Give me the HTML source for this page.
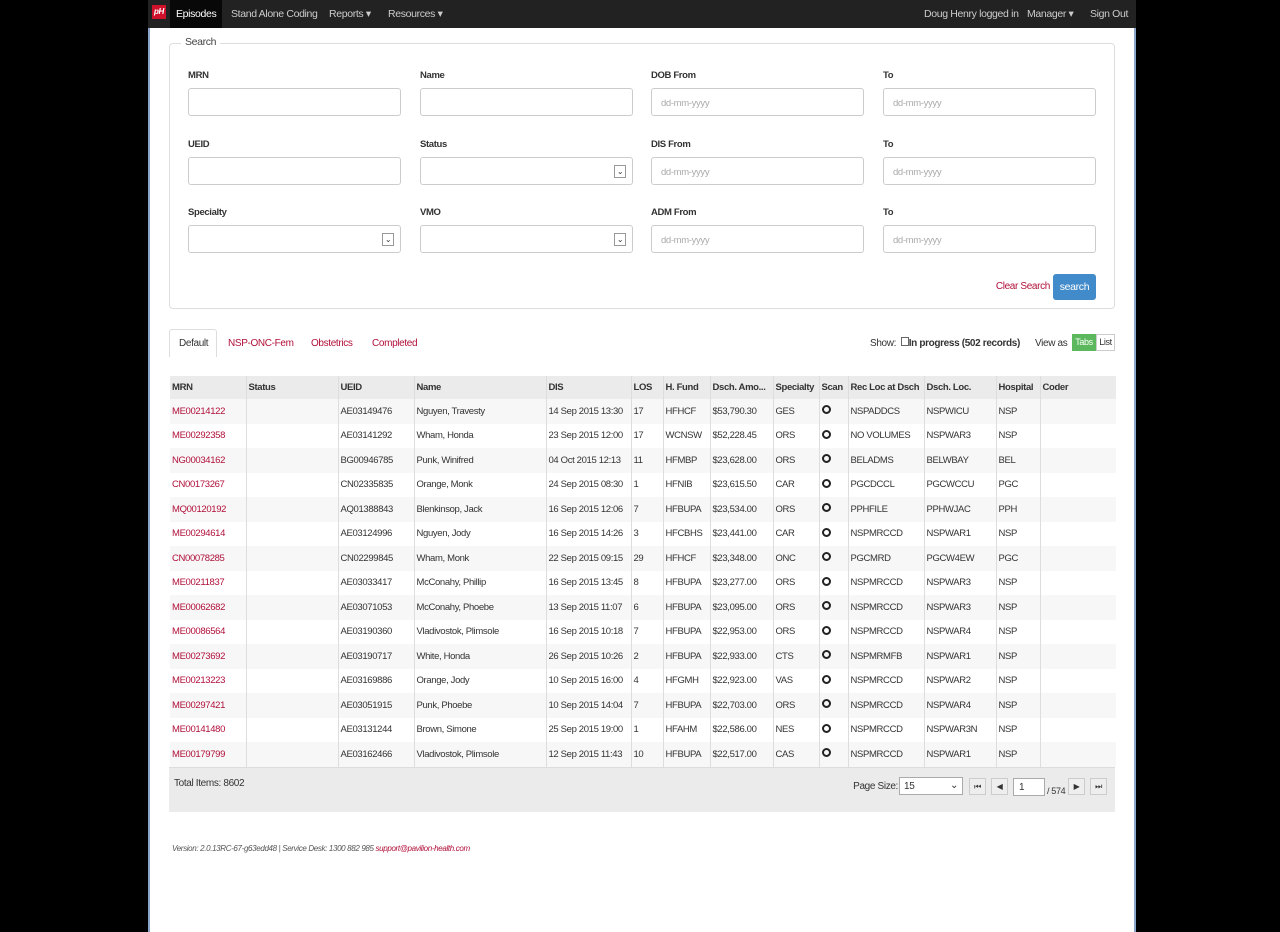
<!DOCTYPE html>
<html><head><meta charset="utf-8"><style>
*{box-sizing:border-box;margin:0;padding:0}
body{width:1280px;height:932px;background:#000;font-family:"Liberation Sans",sans-serif;font-size:10px;color:#333;position:relative;overflow:hidden;letter-spacing:-0.35px}
.page{position:absolute;left:148px;top:0;width:988px;height:932px;background:#fff;border-left:2px solid #8aa6c8;border-right:2px solid #8aa6c8}
.nav{position:absolute;left:148px;top:0;width:988px;height:28px;background:#222;color:#ccc;font-size:10.5px}
.nav span{position:absolute;top:8px}
.a{position:absolute;white-space:nowrap}
.lbl{position:absolute;font-weight:bold;font-size:9.5px;color:#333}
.inp{position:absolute;width:213px;height:28px;border:1px solid #ccc;border-radius:3px;background:#fff;color:#aaa;font-size:9.5px;padding:9px 0 0 9px}
.sel{position:absolute;right:6px;top:7px;width:12px;height:13px;border:1px solid #999;font-size:8px;line-height:11px;text-align:center;color:#333}
table{position:absolute;left:170px;top:376px;width:946px;border-collapse:collapse;font-size:9.5px;table-layout:fixed}
td,th{height:24.5px;padding:0 2px;text-align:left;white-space:nowrap;overflow:hidden;border-left:1px solid #ddd}
td:first-child,th:first-child{border-left:none}
th{background:#ebebeb;font-weight:bold;height:23px}
tr:nth-child(even) td{background:#f7f7f7}
td.r{color:#b0103a}
.o{display:inline-block;width:9px;height:9px;border:2px solid #222;border-radius:50%}
.btn{position:absolute;border:1px solid #ccc;background:#eee;height:17px;width:17px;font-size:8px;text-align:center;line-height:15px}
</style></head><body>
<div class="page"></div>
<div class="nav">
<div class="a" style="left:4px;top:5px;width:14px;height:14px;background:#d0112b;color:#fff;font-size:8px;font-weight:bold;font-style:italic;line-height:14px;text-align:center">pH</div>
<div class="a" style="left:22px;top:0;width:52px;height:28px;background:#080808"></div>
<span style="left:28px;color:#fff">Episodes</span>
<span style="left:83px">Stand Alone Coding</span>
<span style="left:181px">Reports ▾</span>
<span style="left:240px">Resources ▾</span>
<span style="left:776px">Doug Henry logged in</span>
<span style="left:879px">Manager ▾</span>
<span style="left:942px">Sign Out</span>
</div>
<div class="a" style="left:169px;top:43px;width:946px;height:266px;border:1px solid #ddd;border-radius:4px"></div>
<div class="a" style="left:181px;top:36px;background:#fff;padding:0 4px;font-size:10.5px;color:#444">Search</div>

<div class="lbl" style="left:188px;top:70px">MRN</div><div class="inp" style="left:188px;top:88px"></div>
<div class="lbl" style="left:420px;top:70px">Name</div><div class="inp" style="left:420px;top:88px"></div>
<div class="lbl" style="left:651px;top:70px">DOB From</div><div class="inp" style="left:651px;top:88px">dd-mm-yyyy</div>
<div class="lbl" style="left:883px;top:70px">To</div><div class="inp" style="left:883px;top:88px">dd-mm-yyyy</div>
<div class="lbl" style="left:188px;top:139px">UEID</div><div class="inp" style="left:188px;top:157px"></div>
<div class="lbl" style="left:420px;top:139px">Status</div><div class="inp" style="left:420px;top:157px"><div class="sel">⌄</div></div>
<div class="lbl" style="left:651px;top:139px">DIS From</div><div class="inp" style="left:651px;top:157px">dd-mm-yyyy</div>
<div class="lbl" style="left:883px;top:139px">To</div><div class="inp" style="left:883px;top:157px">dd-mm-yyyy</div>
<div class="lbl" style="left:188px;top:207px">Specialty</div><div class="inp" style="left:188px;top:225px"><div class="sel">⌄</div></div>
<div class="lbl" style="left:420px;top:207px">VMO</div><div class="inp" style="left:420px;top:225px"><div class="sel">⌄</div></div>
<div class="lbl" style="left:651px;top:207px">ADM From</div><div class="inp" style="left:651px;top:225px">dd-mm-yyyy</div>
<div class="lbl" style="left:883px;top:207px">To</div><div class="inp" style="left:883px;top:225px">dd-mm-yyyy</div>

<div class="a" style="right:230px;top:281px;color:#b0103a;font-size:10px">Clear Search</div>
<div class="a" style="left:1053px;top:274px;width:43px;height:26px;background:#428bca;border-radius:3px;color:#fff;font-size:10.5px;text-align:center;line-height:26px">search</div>

<div class="a" style="left:169px;top:329px;width:48px;height:28px;border:1px solid #ddd;border-bottom:none;border-radius:3px 3px 0 0"></div>
<div class="a" style="left:179px;top:338px">Default</div>
<div class="a" style="left:228px;top:338px;color:#b0103a">NSP-ONC-Fem</div>
<div class="a" style="left:311px;top:338px;color:#b0103a">Obstetrics</div>
<div class="a" style="left:372px;top:338px;color:#b0103a">Completed</div>
<div class="a" style="left:870px;top:338px">Show:</div>
<div class="a" style="left:901px;top:337px;width:8px;height:9px;border:1px solid #666"></div>
<div class="a" style="right:260px;top:338px;font-weight:bold">In progress (502 records)</div>
<div class="a" style="left:1035px;top:338px">View as</div>
<div class="a" style="left:1072px;top:334px;width:24px;height:17px;background:#5cb85c;color:#fff;font-size:9px;text-align:center;line-height:17px">Tabs</div>
<div class="a" style="left:1096px;top:334px;width:19px;height:17px;border:1px solid #ccc;font-size:9px;text-align:center;line-height:15px">List</div>

<table>
<colgroup><col style="width:76px"><col style="width:92px"><col style="width:76px"><col style="width:132px"><col style="width:85px"><col style="width:32px"><col style="width:47px"><col style="width:63px"><col style="width:46px"><col style="width:29px"><col style="width:76px"><col style="width:72px"><col style="width:44px"><col style="width:76px"></colgroup>
<tr><th>MRN</th><th>Status</th><th>UEID</th><th>Name</th><th>DIS</th><th>LOS</th><th>H. Fund</th><th>Dsch. Amo...</th><th>Specialty</th><th>Scan</th><th>Rec Loc at Dsch</th><th>Dsch. Loc.</th><th>Hospital</th><th>Coder</th></tr>
<tr><td class="r">ME00214122</td><td></td><td>AE03149476</td><td>Nguyen, Travesty</td><td>14 Sep 2015 13:30</td><td>17</td><td>HFHCF</td><td>$53,790.30</td><td>GES</td><td><i class="o"></i></td><td>NSPADDCS</td><td>NSPWICU</td><td>NSP</td><td></td></tr>
<tr><td class="r">ME00292358</td><td></td><td>AE03141292</td><td>Wham, Honda</td><td>23 Sep 2015 12:00</td><td>17</td><td>WCNSW</td><td>$52,228.45</td><td>ORS</td><td><i class="o"></i></td><td>NO VOLUMES</td><td>NSPWAR3</td><td>NSP</td><td></td></tr>
<tr><td class="r">NG00034162</td><td></td><td>BG00946785</td><td>Punk, Winifred</td><td>04 Oct 2015 12:13</td><td>11</td><td>HFMBP</td><td>$23,628.00</td><td>ORS</td><td><i class="o"></i></td><td>BELADMS</td><td>BELWBAY</td><td>BEL</td><td></td></tr>
<tr><td class="r">CN00173267</td><td></td><td>CN02335835</td><td>Orange, Monk</td><td>24 Sep 2015 08:30</td><td>1</td><td>HFNIB</td><td>$23,615.50</td><td>CAR</td><td><i class="o"></i></td><td>PGCDCCL</td><td>PGCWCCU</td><td>PGC</td><td></td></tr>
<tr><td class="r">MQ00120192</td><td></td><td>AQ01388843</td><td>Blenkinsop, Jack</td><td>16 Sep 2015 12:06</td><td>7</td><td>HFBUPA</td><td>$23,534.00</td><td>ORS</td><td><i class="o"></i></td><td>PPHFILE</td><td>PPHWJAC</td><td>PPH</td><td></td></tr>
<tr><td class="r">ME00294614</td><td></td><td>AE03124996</td><td>Nguyen, Jody</td><td>16 Sep 2015 14:26</td><td>3</td><td>HFCBHS</td><td>$23,441.00</td><td>CAR</td><td><i class="o"></i></td><td>NSPMRCCD</td><td>NSPWAR1</td><td>NSP</td><td></td></tr>
<tr><td class="r">CN00078285</td><td></td><td>CN02299845</td><td>Wham, Monk</td><td>22 Sep 2015 09:15</td><td>29</td><td>HFHCF</td><td>$23,348.00</td><td>ONC</td><td><i class="o"></i></td><td>PGCMRD</td><td>PGCW4EW</td><td>PGC</td><td></td></tr>
<tr><td class="r">ME00211837</td><td></td><td>AE03033417</td><td>McConahy, Phillip</td><td>16 Sep 2015 13:45</td><td>8</td><td>HFBUPA</td><td>$23,277.00</td><td>ORS</td><td><i class="o"></i></td><td>NSPMRCCD</td><td>NSPWAR3</td><td>NSP</td><td></td></tr>
<tr><td class="r">ME00062682</td><td></td><td>AE03071053</td><td>McConahy, Phoebe</td><td>13 Sep 2015 11:07</td><td>6</td><td>HFBUPA</td><td>$23,095.00</td><td>ORS</td><td><i class="o"></i></td><td>NSPMRCCD</td><td>NSPWAR3</td><td>NSP</td><td></td></tr>
<tr><td class="r">ME00086564</td><td></td><td>AE03190360</td><td>Vladivostok, Plimsole</td><td>16 Sep 2015 10:18</td><td>7</td><td>HFBUPA</td><td>$22,953.00</td><td>ORS</td><td><i class="o"></i></td><td>NSPMRCCD</td><td>NSPWAR4</td><td>NSP</td><td></td></tr>
<tr><td class="r">ME00273692</td><td></td><td>AE03190717</td><td>White, Honda</td><td>26 Sep 2015 10:26</td><td>2</td><td>HFBUPA</td><td>$22,933.00</td><td>CTS</td><td><i class="o"></i></td><td>NSPMRMFB</td><td>NSPWAR1</td><td>NSP</td><td></td></tr>
<tr><td class="r">ME00213223</td><td></td><td>AE03169886</td><td>Orange, Jody</td><td>10 Sep 2015 16:00</td><td>4</td><td>HFGMH</td><td>$22,923.00</td><td>VAS</td><td><i class="o"></i></td><td>NSPMRCCD</td><td>NSPWAR2</td><td>NSP</td><td></td></tr>
<tr><td class="r">ME00297421</td><td></td><td>AE03051915</td><td>Punk, Phoebe</td><td>10 Sep 2015 14:04</td><td>7</td><td>HFBUPA</td><td>$22,703.00</td><td>ORS</td><td><i class="o"></i></td><td>NSPMRCCD</td><td>NSPWAR4</td><td>NSP</td><td></td></tr>
<tr><td class="r">ME00141480</td><td></td><td>AE03131244</td><td>Brown, Simone</td><td>25 Sep 2015 19:00</td><td>1</td><td>HFAHM</td><td>$22,586.00</td><td>NES</td><td><i class="o"></i></td><td>NSPMRCCD</td><td>NSPWAR3N</td><td>NSP</td><td></td></tr>
<tr><td class="r">ME00179799</td><td></td><td>AE03162466</td><td>Vladivostok, Plimsole</td><td>12 Sep 2015 11:43</td><td>10</td><td>HFBUPA</td><td>$22,517.00</td><td>CAS</td><td><i class="o"></i></td><td>NSPMRCCD</td><td>NSPWAR1</td><td>NSP</td><td></td></tr>
</table>

<div class="a" style="left:169px;top:767px;width:946px;height:45px;background:#ebebeb;border-top:1px solid #ddd"></div>
<div class="a" style="left:174px;top:778px">Total Items: 8602</div>
<div class="a" style="right:382px;top:781px">Page Size:</div>
<div class="a" style="left:899px;top:777px;width:64px;height:18px;border:1px solid #aaa;background:#fff;padding:3px 0 0 4px">15<span style="position:absolute;right:4px;top:2px">⌄</span></div>
<div class="btn" style="left:969px;top:778px">⏮</div>
<div class="btn" style="left:991px;top:778px">◀</div>
<div class="a" style="left:1013px;top:778px;width:32px;height:18px;border:1px solid #aaa;background:#fff;padding:3px 0 0 5px">1</div>
<div class="a" style="left:1047px;top:786px;font-size:9px">/ 574</div>
<div class="btn" style="left:1068px;top:778px">▶</div>
<div class="btn" style="left:1090px;top:778px">⏭</div>
<div class="a" style="left:172px;top:844px;font-size:8px;font-style:italic;color:#555">Version: 2.0.13RC-67-g63edd48 | Service Desk: 1300 882 985 <span style="color:#b0103a">support@pavilion-health.com</span></div>
</body></html>
